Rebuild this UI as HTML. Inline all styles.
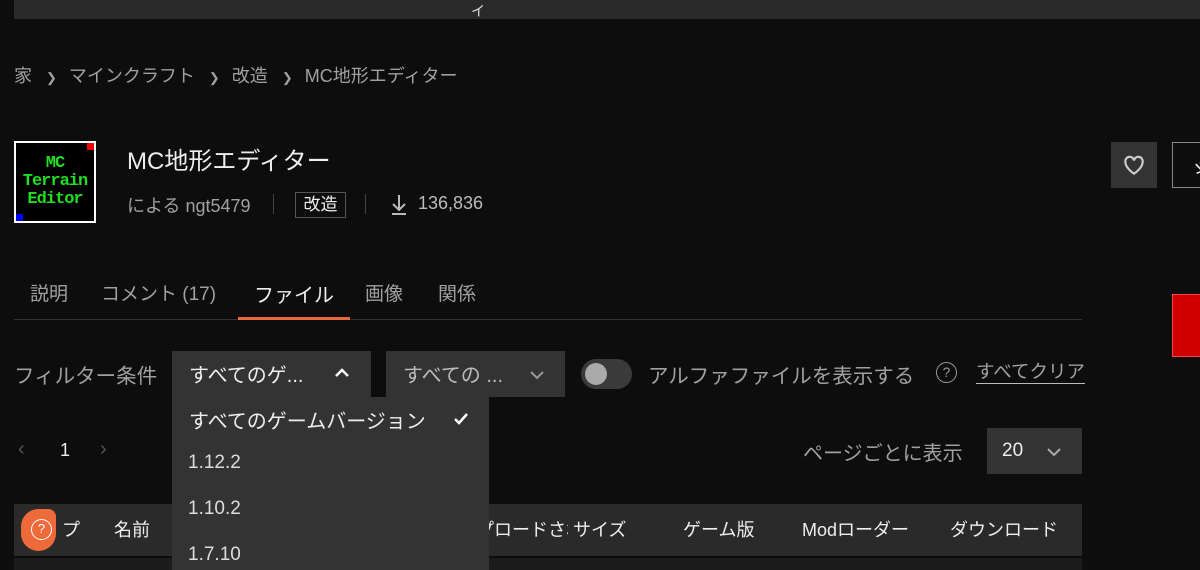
<!DOCTYPE html>
<html><head><meta charset="utf-8"><style>
*{margin:0;padding:0;box-sizing:border-box}
body{width:1200px;height:570px;overflow:hidden;background:#0d0d0d;font-family:"Liberation Sans","Noto Sans CJK JP",sans-serif;color:#d8d8d8;position:relative}
.a{position:absolute;white-space:nowrap}
.g{color:#a0a0a0}
</style></head><body>
<div class="a" style="left:14px;top:0;width:1186px;height:19px;background:#2a2a2a"></div>
<div class="a" style="left:471px;top:1px;font-size:14px;color:#ddd">イ</div>

<div class="a g" style="left:14px;top:62px;font-size:18px;">家<span style="margin:0 12px 0 14px;font-size:13px">❯</span>マインクラフト<span style="margin:0 12px 0 14px;font-size:13px">❯</span>改造<span style="margin:0 12px 0 14px;font-size:13px">❯</span>MC地形エディター</div>

<div class="a" style="left:14px;top:141px;width:82px;height:82px;background:#fff;padding:2px">
 <div style="width:78px;height:78px;background:#000;position:relative;font-family:'Liberation Mono',monospace;color:#22dd22;font-size:17px;font-weight:bold;line-height:18px;text-align:center;padding-top:12px;letter-spacing:-1px">MC<br>Terrain<br>Editor
  <div style="position:absolute;right:0;top:0;width:7px;height:7px;background:#e00"></div>
  <div style="position:absolute;left:0;bottom:0;width:7px;height:7px;background:#00f"></div>
 </div>
</div>
<div class="a" style="left:127px;top:141px;font-size:24px;color:#eee">MC地形エディター</div>
<div class="a g" style="left:127px;top:192px;font-size:18px">による ngt5479</div>
<div class="a" style="left:273px;top:194px;width:1px;height:20px;background:#444"></div>
<div class="a" style="left:295px;top:192px;width:51px;height:26px;border:1px solid #555;font-size:17px;color:#eee;text-align:center;line-height:24px">改造</div>
<div class="a" style="left:365px;top:194px;width:1px;height:20px;background:#444"></div>
<svg class="a" style="left:389px;top:193px" width="20" height="24" viewBox="0 0 20 24"><path d="M10 2v15M4 11l6 6 6-6M3 21h14" stroke="#bbb" stroke-width="2" fill="none"/></svg>
<div class="a g" style="left:418px;top:193px;font-size:18px;color:#bbb">136,836</div>

<div class="a" style="left:1111px;top:142px;width:46px;height:46px;background:#333"></div>
<svg class="a" style="left:1121px;top:152px" width="26" height="26" viewBox="0 0 24 24"><path d="M12 20s-8-5-8-11a4 4 0 0 1 8-1 4 4 0 0 1 8 1c0 6-8 11-8 11z" stroke="#ccc" stroke-width="2" fill="none"/></svg>
<div class="a" style="left:1172px;top:142px;width:40px;height:46px;border:1px solid #888"></div>
<div class="a" style="left:1190px;top:155px;font-size:18px;color:#eee">ゞ</div>
<div class="a" style="left:1172px;top:294px;width:40px;height:63px;background:#d00000;border:1px solid #f44"></div>

<div class="a g" style="left:30px;top:279px;font-size:19px">説明</div>
<div class="a g" style="left:101px;top:279px;font-size:19px">コメント (17)</div>
<div class="a" style="left:254px;top:279px;font-size:20px;color:#eee">ファイル</div>
<div class="a g" style="left:365px;top:279px;font-size:19px">画像</div>
<div class="a g" style="left:438px;top:279px;font-size:19px">関係</div>
<div class="a" style="left:14px;top:319px;width:1068px;height:1px;background:#333"></div>
<div class="a" style="left:238px;top:317px;width:112px;height:3px;background:#e8673f"></div>

<div class="a g" style="left:14px;top:359px;font-size:20.5px">フィルター条件</div>
<div class="a" style="left:172px;top:351px;width:199px;height:46px;background:#333"></div>
<div class="a" style="left:189px;top:359px;font-size:20px;color:#eee">すべてのゲ...</div>
<svg class="a" style="left:334px;top:367px" width="16" height="12"><path d="M2 9l6-6 6 6" stroke="#fff" stroke-width="2.5" fill="none"/></svg>
<div class="a" style="left:386px;top:351px;width:179px;height:46px;background:#333"></div>
<div class="a g" style="left:403px;top:359px;font-size:20px;color:#bbb">すべての ...</div>
<svg class="a" style="left:529px;top:369px" width="16" height="12"><path d="M2 3l6 6 6-6" stroke="#999" stroke-width="2" fill="none"/></svg>
<div class="a" style="left:581px;top:359px;width:51px;height:30px;border-radius:15px;background:#3a3a3a"></div>
<div class="a" style="left:585px;top:363px;width:22px;height:22px;border-radius:11px;background:#aaa"></div>
<div class="a g" style="left:648px;top:359px;font-size:20.5px">アルファファイルを表示する</div>
<div class="a" style="left:936px;top:362px;width:21px;height:21px;border-radius:50%;border:1.5px solid #999;color:#999;font-size:14px;text-align:center;line-height:18px">?</div>
<div class="a g" style="left:976px;top:360px;font-size:18.5px;border-bottom:1px solid #bbb;line-height:23px">すべてクリア</div>

<div class="a" style="left:18px;top:438px;font-size:20px;color:#555">‹</div>
<div class="a" style="left:60px;top:440px;font-size:18px;color:#eee">1</div>
<div class="a" style="left:100px;top:438px;font-size:20px;color:#555">›</div>
<div class="a g" style="left:803px;top:437px;font-size:20px">ページごとに表示</div>
<div class="a" style="left:987px;top:428px;width:95px;height:46px;background:#333"></div>
<div class="a" style="left:1002px;top:440px;font-size:19px;color:#eee">20</div>
<svg class="a" style="left:1046px;top:446px" width="16" height="12"><path d="M2 3l6 6 6-6" stroke="#aaa" stroke-width="2" fill="none"/></svg>

<div class="a" style="left:14px;top:504px;width:1068px;height:52px;background:#2a2a2a"></div>
<div class="a" style="left:14px;top:558px;width:1068px;height:12px;background:#1c1c1c"></div>
<div class="a" style="left:62px;top:516px;font-size:18px;color:#eee">プ</div>
<div class="a" style="left:114px;top:516px;font-size:18px;color:#eee">名前</div>
<div class="a" style="left:440px;top:516px;width:128px;overflow:hidden;font-size:18px;color:#eee">アップロードされた</div>
<div class="a" style="left:573px;top:516px;font-size:18px;color:#eee">サイズ</div>
<div class="a" style="left:683px;top:516px;font-size:18px;color:#eee">ゲーム版</div>
<div class="a" style="left:802px;top:516px;font-size:18px;color:#eee">Modローダー</div>
<div class="a" style="left:950px;top:516px;font-size:18px;color:#eee">ダウンロード</div>
<div class="a" style="left:21px;top:509px;width:35px;height:42px;background:#ee6a3a;border-radius:18px 8px 18px 18px"></div>
<div class="a" style="left:31px;top:519px;width:21px;height:21px;border-radius:50%;border:1.5px solid #fff;color:#fff;font-size:13px;text-align:center;line-height:18px">?</div>

<div class="a" style="left:172px;top:397px;width:317px;height:173px;background:#333"></div>
<div class="a" style="left:189px;top:405px;font-size:20px;color:#eee">すべてのゲームバージョン</div>
<svg class="a" style="left:453px;top:411px" width="16" height="16"><path d="M2 8l4 4 8-9" stroke="#fff" stroke-width="2.5" fill="none"/></svg>
<div class="a" style="left:188px;top:452px;font-size:19px;color:#ddd">1.12.2</div>
<div class="a" style="left:188px;top:498px;font-size:19px;color:#ddd">1.10.2</div>
<div class="a" style="left:188px;top:544px;font-size:19px;color:#ddd">1.7.10</div>
</body></html>
